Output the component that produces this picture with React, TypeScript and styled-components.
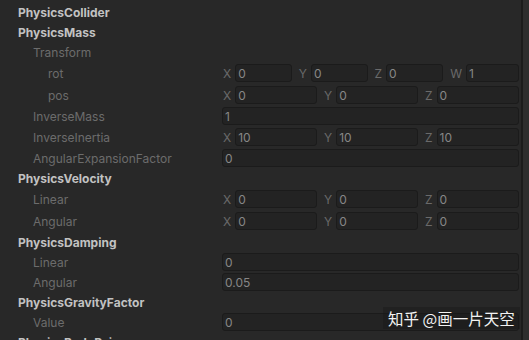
import React from 'react'
import styled, { createGlobalStyle } from 'styled-components'

const GlobalStyle = createGlobalStyle`
  html, body {
    margin: 0;
    padding: 0;
    background: #282828;
  }
  body {
    font-family: Inter, 'Noto Sans', 'Liberation Sans', sans-serif;
  }
`

const Inspector = styled.div`
  position: relative;
  width: 529px;
  height: 340px;
  overflow: hidden;
  display: flex;
  background: #282828;
`

const Content = styled.div`
  flex: 1;
  padding: 2px 2px 0 0;
  display: flex;
  flex-direction: column;
`

const ScrollTrack = styled.div`
  width: 6px;
  border-left: 2px solid #1c1c1c;
  background: #2e2e2e;
`

const Row = styled.div<{ $tall?: boolean }>`
  display: grid;
  grid-template-columns: 222px 1fr;
  align-items: center;
  height: ${({ $tall }) => ($tall ? 22 : 20)}px;
  flex-shrink: 0;
`

const Label = styled.span<{ $depth: number; $header?: boolean }>`
  padding-left: ${({ $depth }) => 18 + $depth * 15}px;
  font-size: 12px;
  font-weight: ${({ $header }) => ($header ? 700 : 400)};
  color: ${({ $header }) => ($header ? '#c2c2c2' : '#6c6c6c')};
  white-space: nowrap;
`

const Vector = styled.div<{ $count: number }>`
  display: grid;
  grid-template-columns: repeat(${({ $count }) => $count}, 1fr);
  column-gap: 6px;
`

const Slot = styled.div`
  display: flex;
  align-items: center;
  min-width: 0;
`

const Axis = styled.span`
  padding-left: 1px;
  margin-right: 4px;
  font-size: 12px;
  color: #6a6a6a;
`

const Field = styled.div`
  flex: 1;
  min-width: 0;
  height: 18px;
  box-sizing: border-box;
  display: flex;
  align-items: center;
  padding-left: 2px;
  background: #232323;
  border: 1px solid #1b1b1b;
  border-radius: 3px;
  font-size: 12px;
  color: #878787;
`

const Watermark = styled.div`
  position: absolute;
  left: 383px;
  top: 307px;
  padding: 0 5px;
  height: 22px;
  display: flex;
  align-items: center;
  background: rgba(24, 24, 24, 0.45);
  font-family: 'Noto Sans CJK SC', sans-serif;
  font-size: 15.5px;
  color: #f2f2f2;
  white-space: nowrap;
`

type Item =
  | { kind: 'header'; label: string }
  | { kind: 'label'; label: string; depth: number }
  | { kind: 'value'; label: string; depth: number; value: string }
  | { kind: 'vector'; label: string; depth: number; axes: [string, string][] }

const xyz = (a: string, b: string, c: string): [string, string][] => [
  ['X', a],
  ['Y', b],
  ['Z', c],
]

const items: Item[] = [
  { kind: 'header', label: 'PhysicsCollider' },
  { kind: 'header', label: 'PhysicsMass' },
  { kind: 'label', label: 'Transform', depth: 1 },
  { kind: 'vector', label: 'rot', depth: 2, axes: [['X', '0'], ['Y', '0'], ['Z', '0'], ['W', '1']] },
  { kind: 'vector', label: 'pos', depth: 2, axes: xyz('0', '0', '0') },
  { kind: 'value', label: 'InverseMass', depth: 1, value: '1' },
  { kind: 'vector', label: 'InverseInertia', depth: 1, axes: xyz('10', '10', '10') },
  { kind: 'value', label: 'AngularExpansionFactor', depth: 1, value: '0' },
  { kind: 'header', label: 'PhysicsVelocity' },
  { kind: 'vector', label: 'Linear', depth: 1, axes: xyz('0', '0', '0') },
  { kind: 'vector', label: 'Angular', depth: 1, axes: xyz('0', '0', '0') },
  { kind: 'header', label: 'PhysicsDamping' },
  { kind: 'value', label: 'Linear', depth: 1, value: '0' },
  { kind: 'value', label: 'Angular', depth: 1, value: '0.05' },
  { kind: 'header', label: 'PhysicsGravityFactor' },
  { kind: 'value', label: 'Value', depth: 1, value: '0' },
  { kind: 'header', label: 'PhysicsBodyPairs' },
]

function InspectorRow({ item }: { item: Item }) {
  if (item.kind === 'header') {
    return (
      <Row>
        <Label $depth={0} $header>
          {item.label}
        </Label>
      </Row>
    )
  }
  if (item.kind === 'label') {
    return (
      <Row>
        <Label $depth={item.depth}>{item.label}</Label>
      </Row>
    )
  }
  if (item.kind === 'value') {
    return (
      <Row>
        <Label $depth={item.depth}>{item.label}</Label>
        <Field>{item.value}</Field>
      </Row>
    )
  }
  return (
    <Row $tall>
      <Label $depth={item.depth}>{item.label}</Label>
      <Vector $count={item.axes.length}>
        {item.axes.map(([axis, v]) => (
          <Slot key={axis}>
            <Axis>{axis}</Axis>
            <Field>{v}</Field>
          </Slot>
        ))}
      </Vector>
    </Row>
  )
}

export default function App() {
  return (
    <>
      <GlobalStyle />
      <Inspector>
        <Content>
          {items.map((item, i) => (
            <InspectorRow key={i} item={item} />
          ))}
        </Content>
        <ScrollTrack />
        <Watermark>知乎 @画一片天空</Watermark>
      </Inspector>
    </>
  )
}
